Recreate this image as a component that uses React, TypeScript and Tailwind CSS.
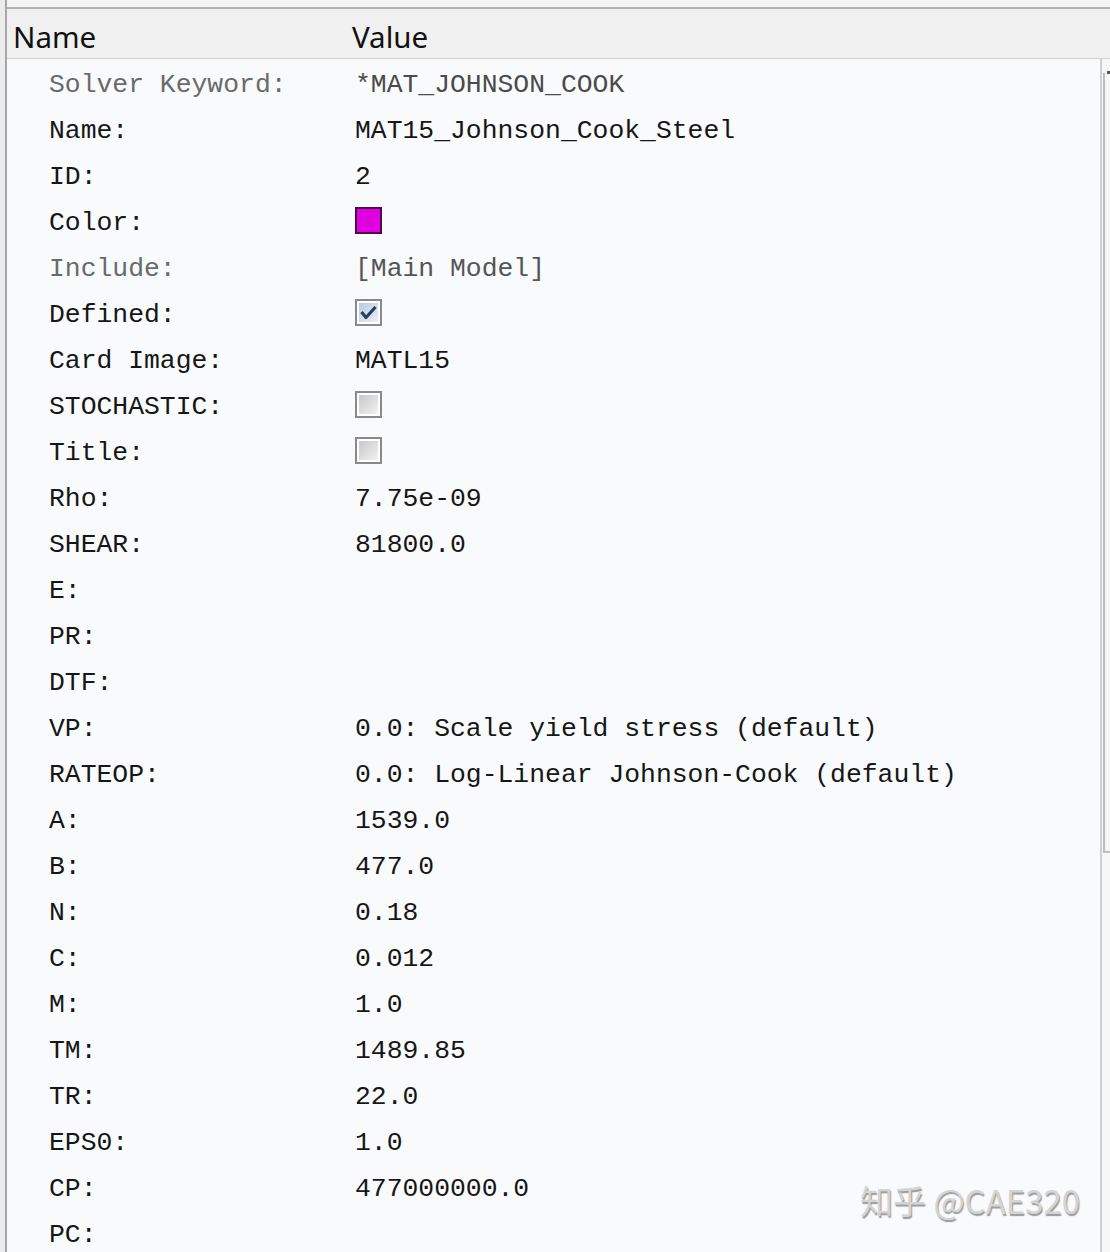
import { ReactNode } from "react"

type Row = {
  label: string
  value?: ReactNode
  dim?: boolean
}

function Swatch() {
  return <div className="w-[27px] h-[27px] bg-[#e000e0] border-2 border-[#4a0a4a]" />
}

function Check({ on }: { on?: boolean }) {
  return (
    <div className="w-[27px] h-[27px] border-2 border-[#8a8a8a] bg-white p-[2px]">
      <div
        className={
          on
            ? "w-full h-full bg-gradient-to-br from-[#b9cbe0] to-[#e9f0f8] flex items-center justify-center"
            : "w-full h-full bg-gradient-to-br from-[#c8c8c8] to-[#f2f2f2]"
        }
      >
        {on && (
          <svg width="17" height="15" viewBox="0 0 17 15">
            <path d="M1.5 7 L6 12.5 L15.5 2" fill="none" stroke="#27405e" strokeWidth="3.2" strokeLinejoin="round" />
          </svg>
        )}
      </div>
    </div>
  )
}

const rows: Row[] = [
  { label: "Solver Keyword:", value: <span className="text-[#4a4a4a]">*MAT_JOHNSON_COOK</span>, dim: true },
  { label: "Name:", value: "MAT15_Johnson_Cook_Steel" },
  { label: "ID:", value: "2" },
  { label: "Color:", value: <Swatch /> },
  { label: "Include:", value: <span className="text-[#555]">[Main Model]</span>, dim: true },
  { label: "Defined:", value: <Check on /> },
  { label: "Card Image:", value: "MATL15" },
  { label: "STOCHASTIC:", value: <Check /> },
  { label: "Title:", value: <Check /> },
  { label: "Rho:", value: "7.75e-09" },
  { label: "SHEAR:", value: "81800.0" },
  { label: "E:" },
  { label: "PR:" },
  { label: "DTF:" },
  { label: "VP:", value: "0.0: Scale yield stress (default)" },
  { label: "RATEOP:", value: "0.0: Log-Linear Johnson-Cook (default)" },
  { label: "A:", value: "1539.0" },
  { label: "B:", value: "477.0" },
  { label: "N:", value: "0.18" },
  { label: "C:", value: "0.012" },
  { label: "M:", value: "1.0" },
  { label: "TM:", value: "1489.85" },
  { label: "TR:", value: "22.0" },
  { label: "EPS0:", value: "1.0" },
  { label: "CP:", value: "477000000.0" },
  { label: "PC:" },
]

export default function App() {
  return (
    <div className="w-[1110px] h-[1252px] overflow-hidden bg-[#e9e9e9] relative">
      <div className="flex h-full">
        {/* 左の枠 */}
        <div className="w-[7px] shrink-0 bg-[#ececec] border-r-2 border-[#a6a6a6]" />

        <div className="flex-1 flex flex-col">
          {/* 上の帯 */}
          <div className="h-[9px] shrink-0 bg-[#f4f4f4] border-b-2 border-[#b4b4b4]" />

          {/* ヘッダー */}
          <div className="h-[50px] shrink-0 bg-[#f0f0f0] border-b border-[#d2d2d2] flex items-center font-['Noto_Sans',sans-serif] text-[29.5px] text-[#111] leading-none pt-[7px]">
            <div className="w-[345px] pl-[6px]">Name</div>
            <div>Value</div>
          </div>

          <div className="flex-1 flex">
            {/* 本体 */}
            <div className="flex-1 bg-[#f9fafc] border-r-2 border-[#cfcfcf] font-['Liberation_Mono','Noto_Sans_CJK_SC',monospace] text-[26.4px] leading-none text-[#161616]">
              {rows.map((r) => (
                <div key={r.label} className="h-[46px] flex items-center">
                  <div className={"w-[348px] pl-[42px] pt-[6px] " + (r.dim ? "text-[#6a6a6a]" : "")}>{r.label}</div>
                  <div className={"flex items-center " + (typeof r.value === "object" && r.value && (r.value as { type?: unknown }).type !== "span" ? "" : "pt-[6px]")}>
                    {r.value}
                  </div>
                </div>
              ))}
            </div>

            {/* スクロールバー */}
            <div className="w-[8px] shrink-0 bg-[#f6f6f6] flex flex-col">
              <div className="h-[14px] flex items-start justify-end pt-[12px]">
                <div className="w-[3px] h-[3px] bg-[#555]" />
              </div>
              <div className="h-[780px] ml-[1px] border-l-2 border-b-2 border-[#bdbdbd]" />
            </div>
          </div>
        </div>
      </div>

      {/* 透かし */}
      <div className="absolute left-[860px] top-[1184px] font-['Noto_Sans_CJK_SC',sans-serif] text-[33px] leading-none text-[#d4d4d4] [text-shadow:1px_2px_1px_#9a9a9a]">
        知乎 @CAE320
      </div>
    </div>
  )
}
